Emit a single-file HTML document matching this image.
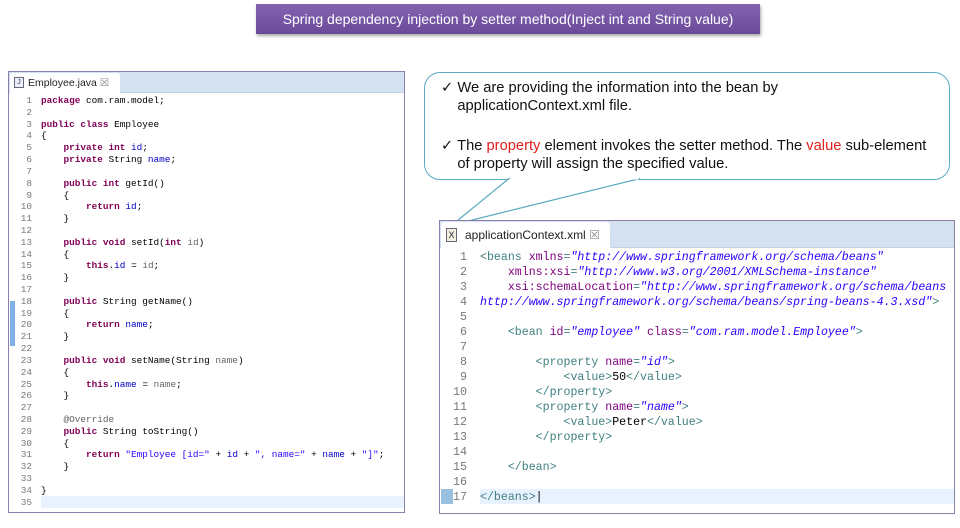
<!DOCTYPE html>
<html><head><style>
body{margin:0;width:960px;height:528px;background:#fff;position:relative;font-family:"Liberation Sans",sans-serif;overflow:hidden}
.title{position:absolute;left:256px;top:4px;width:504px;height:30px;background:linear-gradient(#8464b0,#6a4a9a);box-shadow:1px 2px 3px rgba(0,0,0,.35);color:#fff;font-size:14px;line-height:30px;text-align:center}
.panel{position:absolute;border:1px solid #8a7fa8;background:#fff}
.tabbar{position:absolute;left:0;right:0;top:0;background:#d3e1f1;border-bottom:1px solid #c3d3e6}
.tab{position:absolute;left:1px;top:1px;bottom:-1px;background:#fff;border-radius:3px 3px 0 0;font-size:11px;color:#222}
.code{position:absolute;font-family:"Liberation Mono",monospace;white-space:pre;margin:0}
.k{color:#7f0055;font-weight:bold}.f{color:#0000c0}.s{color:#2a00ff}.n{color:#787878}.a{color:#646464}
.t{color:#3f7f7f}.at{color:#7f007f}.v{color:#2a00ff;font-style:italic}
.callout{position:absolute;left:424px;top:72px;width:524px;height:106px;border:1.5px solid #5aaac0;border-radius:16px;background:#fff;font-size:14.7px;color:#111;line-height:18px}
.r{color:#e0201c}
</style></head><body>
<div class="title">Spring dependency injection by setter method(Inject int and String value)</div>

<div class="panel" style="left:8px;top:71px;width:395px;height:440px;">
 <div class="tabbar" style="height:20px"><div class="tab" style="width:92px;padding-left:18px;line-height:20px;font-size:10.5px">Employee.java <span style="color:#888">☒</span></div>
 <div style="position:absolute;left:5px;top:5px;width:8px;height:9px;border:1px solid #667;background:#eef;font-size:7px;line-height:9px;text-align:center;color:#335">J</div></div>
 <div style="position:absolute;left:1px;top:229px;width:5px;height:45px;background:#7fb0e8"></div>
 <div style="position:absolute;left:32px;top:424px;right:0;height:12px;background:#e8f2fe"></div>
<pre class="code n" style="left:0;top:23px;width:23px;text-align:right;font-size:9.4px;line-height:11.82px">1
2
3
4
5
6
7
8
9
10
11
12
13
14
15
16
17
18
19
20
21
22
23
24
25
26
27
28
29
30
31
32
33
34
35</pre>
<pre class="code" style="left:32px;top:23px;font-size:9.4px;line-height:11.82px;color:#000"><span class="k">package</span> com.ram.model;

<span class="k">public class</span> Employee
{
    <span class="k">private int</span> <span class="f">id</span>;
    <span class="k">private</span> String <span class="f">name</span>;

    <span class="k">public int</span> getId()
    {
        <span class="k">return</span> <span class="f">id</span>;
    }

    <span class="k">public void</span> setId(<span class="k">int</span> <span class="a">id</span>)
    {
        <span class="k">this</span>.<span class="f">id</span> = <span class="a">id</span>;
    }

    <span class="k">public</span> String getName()
    {
        <span class="k">return</span> <span class="f">name</span>;
    }

    <span class="k">public void</span> setName(String <span class="a">name</span>)
    {
        <span class="k">this</span>.<span class="f">name</span> = <span class="a">name</span>;
    }

    <span class="a">@Override</span>
    <span class="k">public</span> String toString()
    {
        <span class="k">return</span> <span class="s">"Employee [id="</span> + <span class="f">id</span> + <span class="s">", name="</span> + <span class="f">name</span> + <span class="s">"]"</span>;
    }

}
</pre>
</div>

<div class="callout">
 <div style="position:absolute;left:16px;top:6px">✓ We are providing the information into the bean by<br>&nbsp;&nbsp;&nbsp;&nbsp;applicationContext.xml file.</div>
 <div style="position:absolute;left:16px;top:64px">✓ The <span class="r">property</span> element invokes the setter method. The <span class="r">value</span> sub-element<br>&nbsp;&nbsp;&nbsp;&nbsp;of property will assign the specified value.</div>
</div>
<svg style="position:absolute;left:0;top:0" width="960" height="528"><polygon points="509,178.5 452,225 640,178.5" fill="#fff" stroke="#5aaac0" stroke-width="1.2"/><line x1="510" y1="178.5" x2="639" y2="178.5" stroke="#fff" stroke-width="2"/></svg>

<div class="panel" style="left:439px;top:220px;width:514px;height:292px;">
 <div class="tabbar" style="height:26px"><div class="tab" style="width:145px;padding-left:24px;line-height:26px;font-size:12px">applicationContext.xml <span style="color:#888">☒</span></div>
 <div style="position:absolute;left:6px;top:7px;width:9px;height:12px;border:1px solid #667;background:#f4f0e0;font-size:9px;line-height:12px;text-align:center;color:#223">X</div></div>
 <div style="position:absolute;left:1px;top:268px;width:12px;height:15px;background:#9ac0e0"></div>
 <div style="position:absolute;left:40px;top:268px;right:0;height:15px;background:#e8f2fe"></div>
<pre class="code n" style="left:0;top:29px;width:27px;text-align:right;font-size:11.7px;line-height:15px">1
2
3
4
5
6
7
8
9
10
11
12
13
14
15
16
17</pre>
<pre class="code t" style="left:40px;top:29px;font-size:11.6px;line-height:15px">&lt;beans <span class="at">xmlns</span>=<span class="v">"http://www.springframework.org/schema/beans"</span>
    <span class="at">xmlns:xsi</span>=<span class="v">"http://www.w3.org/2001/XMLSchema-instance"</span>
    <span class="at">xsi:schemaLocation</span>=<span class="v">"http://www.springframework.org/schema/beans</span>
<span class="v">http://www.springframework.org/schema/beans/spring-beans-4.3.xsd"</span>&gt;

    &lt;bean <span class="at">id</span>=<span class="v">"employee"</span> <span class="at">class</span>=<span class="v">"com.ram.model.Employee"</span>&gt;

        &lt;property <span class="at">name</span>=<span class="v">"id"</span>&gt;
            &lt;value&gt;<span style="color:#000">50</span>&lt;/value&gt;
        &lt;/property&gt;
        &lt;property <span class="at">name</span>=<span class="v">"name"</span>&gt;
            &lt;value&gt;<span style="color:#000">Peter</span>&lt;/value&gt;
        &lt;/property&gt;

    &lt;/bean&gt;

&lt;/beans&gt;<span style="color:#000">|</span></pre>
</div>
</body></html>
